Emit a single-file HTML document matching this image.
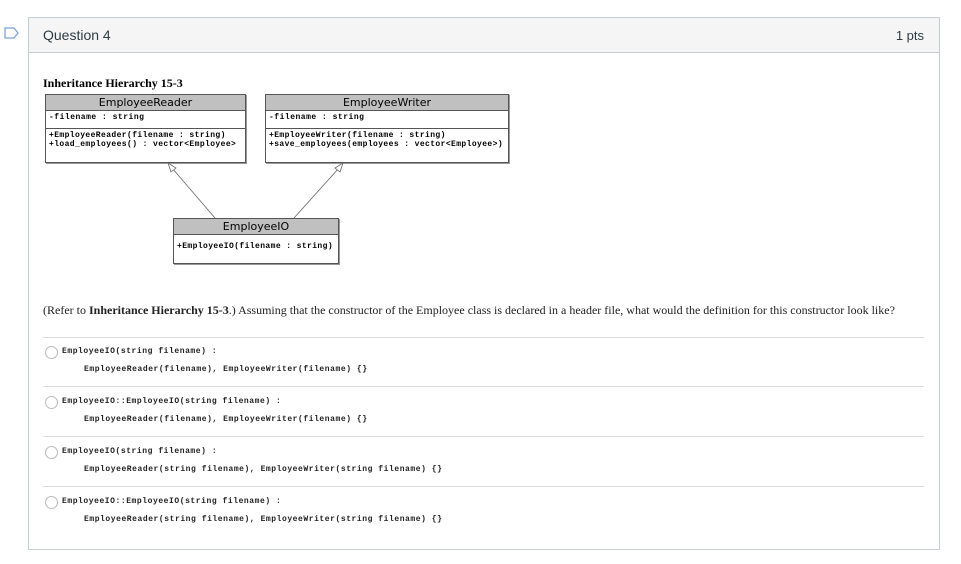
<!DOCTYPE html>
<html><head><style>
body{margin:0;background:#fff;width:961px;height:564px;position:relative;overflow:hidden;font-family:"Liberation Serif",serif}
.box{position:absolute;left:28px;top:17px;width:910px;height:531px;border:1px solid #c7cdd1}
.hdr{position:absolute;left:0;top:0;right:0;height:34px;background:#f5f5f5;border-bottom:1px solid #c7cdd1}
.hdr .t{position:absolute;left:14px;top:9px;font:14px "Liberation Sans",sans-serif;color:#2d3b45}
.hdr .p{position:absolute;right:15px;top:10px;font:13px "Liberation Sans",sans-serif;color:#2d3b45}
.a{position:absolute}
.cls{position:absolute;border:1px solid #555;background:#fff;box-shadow:1px 1px 0 #999}
.cls .h{background:#c0c0c0;border-bottom:1px solid #555;height:15px;text-align:center;font:11px "DejaVu Sans",sans-serif;line-height:15px}
.cls .r{border-bottom:1px solid #555;font:bold 8px "Liberation Mono",monospace;letter-spacing:0.5px;padding:2px 3px;line-height:10px;white-space:nowrap}
.cls .m{font:bold 8px "Liberation Mono",monospace;letter-spacing:0.4px;padding:2px 3px;line-height:9px;white-space:nowrap}
.sep{position:absolute;left:14px;width:881px;height:1px;background:#dcdcdc}
.rad{position:absolute;left:16px;width:11px;height:11px;border:1px solid #bbb;border-radius:50%}
.c1,.c2{position:absolute;font:bold 8px "Liberation Mono",monospace;letter-spacing:0.55px;color:#222;white-space:nowrap}
.c1{left:33px}.c2{left:55px}
</style></head><body>
<svg class="a" style="left:4px;top:27px" width="16" height="12"><path d="M1 1H10L14 6L10 11H1Z" fill="none" stroke="#7aa3d6" stroke-width="1.3"/></svg>
<div class="box">
<div class="hdr"><div class="t">Question 4</div><div class="p">1 pts</div></div>
<div class="a" style="left:14px;top:58px;font-weight:bold;font-size:12px">Inheritance Hierarchy 15-3</div>
<div class="cls" style="left:16px;top:76px;width:199px;height:67px"><div class="h">EmployeeReader</div><div class="r" style="height:13px">-filename : string</div><div class="m">+EmployeeReader(filename : string)<br>+load_employees() : vector&lt;Employee&gt;</div></div>
<div class="cls" style="left:236px;top:76px;width:242px;height:67px"><div class="h">EmployeeWriter</div><div class="r" style="height:13px">-filename : string</div><div class="m">+EmployeeWriter(filename : string)<br>+save_employees(employees : vector&lt;Employee&gt;)</div></div>
<div class="cls" style="left:144px;top:200px;width:164px;height:44px"><div class="h">EmployeeIO</div><div class="m" style="padding-top:7px">+EmployeeIO(filename : string)</div></div>
<svg class="a" style="left:0;top:0" width="910" height="260"><g stroke="#666" fill="#fff" stroke-width="0.8"><line x1="186" y1="200" x2="143" y2="150"/><line x1="265" y1="200" x2="310" y2="150"/><path d="M139 145L147 150L142 154Z"/><path d="M314 145L306 150L311 154Z"/></g></svg>
<div class="a" style="left:14px;top:285px;font-size:12px;color:#222">(Refer to <b>Inheritance Hierarchy 15-3</b>.) Assuming that the constructor of the Employee class is declared in a header file, what would the definition for this constructor look like?</div>
<div class="sep" style="top:319px"></div>
<div class="rad" style="top:328px"></div><div class="c1" style="top:329px">EmployeeIO(string filename) :</div><div class="c2" style="top:347px">EmployeeReader(filename), EmployeeWriter(filename) {}</div>
<div class="sep" style="top:368px"></div>
<div class="rad" style="top:378px"></div><div class="c1" style="top:379px">EmployeeIO::EmployeeIO(string filename) :</div><div class="c2" style="top:397px">EmployeeReader(filename), EmployeeWriter(filename) {}</div>
<div class="sep" style="top:418px"></div>
<div class="rad" style="top:428px"></div><div class="c1" style="top:429px">EmployeeIO(string filename) :</div><div class="c2" style="top:447px">EmployeeReader(string filename), EmployeeWriter(string filename) {}</div>
<div class="sep" style="top:468px"></div>
<div class="rad" style="top:478px"></div><div class="c1" style="top:479px">EmployeeIO::EmployeeIO(string filename) :</div><div class="c2" style="top:497px">EmployeeReader(string filename), EmployeeWriter(string filename) {}</div>
</div>
</body></html>
